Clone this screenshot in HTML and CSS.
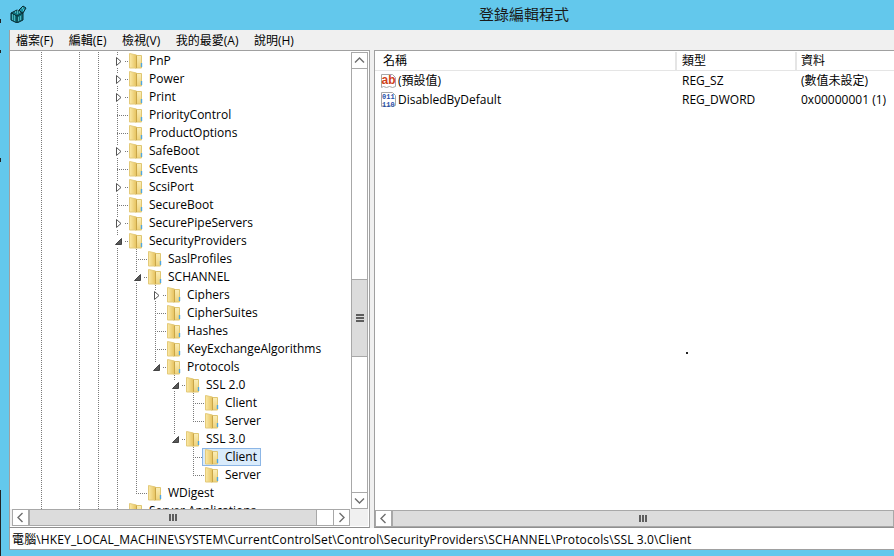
FILE: index.html
```html
<!DOCTYPE html>
<html lang="zh-Hant">
<head>
<meta charset="utf-8">
<title>登錄編輯程式</title>
<link rel="stylesheet" href="styles.css">
</head>
<body>
<svg class="defs" width="0" height="0" aria-hidden="true">
  <defs>
    <linearGradient id="fg" x1="0" y1="0" x2="1" y2="0">
      <stop offset="0" stop-color="#fbeaa8"/>
      <stop offset="1" stop-color="#e6c25e"/>
    </linearGradient>
    <linearGradient id="bg" x1="0" y1="0" x2="0" y2="1">
      <stop offset="0" stop-color="#fbeeb6"/>
      <stop offset="1" stop-color="#efd27a"/>
    </linearGradient>
    <symbol id="folder" viewBox="0 0 14 16">
      <path d="M6 2.500h6.500v12.500H6z" fill="url(#bg)" stroke="#dfc672"/>
      <path d="M.5.500 7.500 2v13H.5z" fill="url(#fg)" stroke="#e4ca7a"/>
      <path d="M7.500 2.500V15" stroke="#c8a548"/>
      <path d="M12.500 10v4" stroke="#4fa6de" stroke-width="1.400"/>
    </symbol>
    <symbol id="closed" viewBox="0 0 9 11">
      <rect width="9" height="11" fill="#fff"/>
      <path d="M2.500 1.500v8l4.500-4z" fill="#fff" stroke="#555"/>
    </symbol>
    <symbol id="open" viewBox="0 0 9 11">
      <rect width="9" height="11" fill="#fff"/>
      <path d="M1.500 8.500h6v-6z" fill="#595959" stroke="#444"/>
    </symbol>
  </defs>
</svg>

<header class="title">
  <svg class="app-icon" width="17" height="18" viewBox="0 0 17 18">
    <path d="M1 8 7 5l6 3v7l-6 3-6-3z" fill="#0f7480" stroke="#0b2a30"/>
    <path d="M7 11v7M1 8l6 3 6-3" stroke="#0b2a30" fill="none"/>
    <path d="M2 10h1M4 11h1M2 12h1M4 13h1M2 14h1M4 15h1M8 13h1M10 12h1M8 15h1M10 14h1M5 7h1M7 8h1M9 7h1M7 6h1" stroke="#8ff3f5"/>
    <path d="M9 5 13 1l3 2-3 5-2-1z" fill="#178c9e" stroke="#0b2a30"/>
    <path d="M12 3h1M13 5h1" stroke="#8ff3f5"/>
  </svg>
  <span class="title-text">登錄編輯程式</span>
</header>

<div class="window">
  <nav class="menu">
    <span>檔案(F)</span><span>編輯(E)</span><span>檢視(V)</span><span>我的最愛(A)</span><span>說明(H)</span>
  </nav>

  <main class="panes">
    <section class="pane tree-pane">
      <div class="tree">
        <svg class="guides" width="341" height="457" viewBox="10 52 341 457">
          <path d="M41.500 52v457M79.500 52v457M98.500 52v457M117.500 52v457
                   M136.500 241v252M155.500 277v90M174.500 367v72M193.500 385v36M193.500 439v36
                   M125 61h4M125 79h4M125 97h4M117 115h12M117 133h12M125 151h4M117 169h12M125 187h4M117 205h12M125 223h4M125 241h4
                   M136 259h12M144 277h4M163 295h4M155 313h12M155 331h12M155 349h12M163 367h4
                   M182 385h4M193 403h12M193 421h12M182 439h4M193 457h9M193 475h12M136 493h12"
                fill="none" stroke="#7a7a7a" stroke-dasharray="1 1" shape-rendering="crispEdges"/>
        </svg>
        <ul class="rows">
          <li class="row l0"><svg class="exp"><use href="#closed"/></svg><span class="node"><svg class="fd"><use href="#folder"/></svg>PnP</span></li>
          <li class="row l0"><svg class="exp"><use href="#closed"/></svg><span class="node"><svg class="fd"><use href="#folder"/></svg>Power</span></li>
          <li class="row l0"><svg class="exp"><use href="#closed"/></svg><span class="node"><svg class="fd"><use href="#folder"/></svg>Print</span></li>
          <li class="row l0"><i class="noexp"></i><span class="node"><svg class="fd"><use href="#folder"/></svg>PriorityControl</span></li>
          <li class="row l0"><i class="noexp"></i><span class="node"><svg class="fd"><use href="#folder"/></svg>ProductOptions</span></li>
          <li class="row l0"><svg class="exp"><use href="#closed"/></svg><span class="node"><svg class="fd"><use href="#folder"/></svg>SafeBoot</span></li>
          <li class="row l0"><i class="noexp"></i><span class="node"><svg class="fd"><use href="#folder"/></svg>ScEvents</span></li>
          <li class="row l0"><svg class="exp"><use href="#closed"/></svg><span class="node"><svg class="fd"><use href="#folder"/></svg>ScsiPort</span></li>
          <li class="row l0"><i class="noexp"></i><span class="node"><svg class="fd"><use href="#folder"/></svg>SecureBoot</span></li>
          <li class="row l0"><svg class="exp"><use href="#closed"/></svg><span class="node"><svg class="fd"><use href="#folder"/></svg>SecurePipeServers</span></li>
          <li class="row l0"><svg class="exp"><use href="#open"/></svg><span class="node"><svg class="fd"><use href="#folder"/></svg>SecurityProviders</span></li>
          <li class="row l1"><i class="noexp"></i><span class="node"><svg class="fd"><use href="#folder"/></svg>SaslProfiles</span></li>
          <li class="row l1"><svg class="exp"><use href="#open"/></svg><span class="node"><svg class="fd"><use href="#folder"/></svg>SCHANNEL</span></li>
          <li class="row l2"><svg class="exp"><use href="#closed"/></svg><span class="node"><svg class="fd"><use href="#folder"/></svg>Ciphers</span></li>
          <li class="row l2"><i class="noexp"></i><span class="node"><svg class="fd"><use href="#folder"/></svg>CipherSuites</span></li>
          <li class="row l2"><i class="noexp"></i><span class="node"><svg class="fd"><use href="#folder"/></svg>Hashes</span></li>
          <li class="row l2"><i class="noexp"></i><span class="node"><svg class="fd"><use href="#folder"/></svg>KeyExchangeAlgorithms</span></li>
          <li class="row l2"><svg class="exp"><use href="#open"/></svg><span class="node"><svg class="fd"><use href="#folder"/></svg>Protocols</span></li>
          <li class="row l3"><svg class="exp"><use href="#open"/></svg><span class="node"><svg class="fd"><use href="#folder"/></svg>SSL 2.0</span></li>
          <li class="row l4"><i class="noexp"></i><span class="node"><svg class="fd"><use href="#folder"/></svg>Client</span></li>
          <li class="row l4"><i class="noexp"></i><span class="node"><svg class="fd"><use href="#folder"/></svg>Server</span></li>
          <li class="row l3"><svg class="exp"><use href="#open"/></svg><span class="node"><svg class="fd"><use href="#folder"/></svg>SSL 3.0</span></li>
          <li class="row l4"><i class="noexp"></i><span class="node sel"><svg class="fd"><use href="#folder"/></svg>Client</span></li>
          <li class="row l4"><i class="noexp"></i><span class="node"><svg class="fd"><use href="#folder"/></svg>Server</span></li>
          <li class="row l1"><i class="noexp"></i><span class="node"><svg class="fd"><use href="#folder"/></svg>WDigest</span></li>
          <li class="row l0"><i class="noexp"></i><span class="node"><svg class="fd"><use href="#folder"/></svg>Server Applications</span></li>
        </ul>
      </div>
      <div class="vbar">
        <span class="btn"><svg width="15" height="15" viewBox="0 0 15 15"><path d="M3 9.500l4.500-4.500 4.500 4.500" class="chev"/></svg></span>
        <span class="track t1"></span>
        <span class="thumb vthumb"><i class="grip-h"></i></span>
        <span class="track"></span>
        <span class="btn"><svg width="15" height="15" viewBox="0 0 15 15"><path d="M3 5.500l4.500 4.500 4.500-4.500" class="chev"/></svg></span>
      </div>
      <div class="hbar">
        <span class="btn"><svg width="15" height="15" viewBox="0 0 15 15"><path d="M9.500 3l-4.500 4.500 4.500 4.500" class="chev"/></svg></span>
        <span class="thumb htree"><i class="grip-v"></i></span>
        <span class="track"></span>
        <span class="btn"><svg width="15" height="15" viewBox="0 0 15 15"><path d="M5.500 3l4.500 4.500-4.500 4.500" class="chev"/></svg></span>
      </div>
      <div class="corner"></div>
    </section>

    <section class="pane list-pane">
      <div class="grid head">
        <span class="c1">名稱</span><span class="c2">類型</span><span class="c3">資料</span>
      </div>
      <div class="grid item">
        <span class="c1 named">
          <svg class="val" width="16" height="16" viewBox="0 0 16 16">
            <path d="M.5 1.500h11l3 3v9l-3 1-3-1-3 1-3-1-2 1z" fill="#fff" stroke="#a8a8a8"/>
            <text x=".5" y="11" class="ab">ab</text>
          </svg>(預設值)
        </span>
        <span class="c2">REG_SZ</span><span class="c3">(數值未設定)</span>
      </div>
      <div class="grid item">
        <span class="c1 named">
          <svg class="val" width="16" height="16" viewBox="0 0 16 16">
            <path d="M.5 .5h11l3 3v10l-3 1-3-1-3 1-3-1-2 1z" fill="#fff" stroke="#a8a8a8"/>
            <text x="1" y="7" class="bits">011</text>
            <text x="1" y="14.500" class="bits">110</text>
          </svg>DisabledByDefault
        </span>
        <span class="c2">REG_DWORD</span><span class="c3">0x00000001 (1)</span>
      </div>
      <div class="list-fill"><i class="speck"></i></div>
      <div class="hbar">
        <span class="btn"><svg width="15" height="15" viewBox="0 0 15 15"><path d="M9.500 3l-4.500 4.500 4.500 4.500" class="chev"/></svg></span>
        <span class="thumb hlist"><i class="grip-v"></i></span>
      </div>
    </section>
  </main>

  <footer class="status">電腦\HKEY_LOCAL_MACHINE\SYSTEM\CurrentControlSet\Control\SecurityProviders\SCHANNEL\Protocols\SSL 3.0\Client</footer>
</div>

<i class="edge e1"></i><i class="edge e2"></i><i class="edge e3"></i><i class="edge e4"></i>
</body>
</html>
```

FILE: styles.css
```css
* { box-sizing: border-box; }
html, body { margin: 0; padding: 0; }
body {
  position: relative;
  width: 894px;
  height: 556px;
  overflow: hidden;
  background: #63c8ec;
  color: #000;
  font: 12px/18px "Open Sans", "Noto Sans CJK TC", sans-serif;
}
.defs { position: absolute; }

.title {
  display: flex;
  align-items: center;
  height: 30px;
  padding-left: 10px;
}
.app-icon { flex: none; margin-bottom: 2px; }
.title-text {
  margin: 0 0 2px 452px;
  font-size: 15px;
  color: #1a1a1a;
}

.window {
  display: flex;
  flex-direction: column;
  margin-left: 9px;
  height: 520px;
  background: #f0f0f0;
}
.menu {
  display: flex;
  gap: 15.500px;
  height: 20px;
  padding: 1px 0 0 6px;
  line-height: 20px;
  border-left: 1px solid #a0a0a0;
}

.panes {
  display: flex;
  gap: 4px;
  height: 478px;
  background: #f0f0f0;
}
.pane {
  background: #fff;
  border-top: 1px solid #a0a0a0;
  border-left: 1px solid #a0a0a0;
  border-bottom: 1px solid #8f8f8f;
  padding-top: 1px;
  height: 478px;
}

.tree-pane {
  display: grid;
  grid-template-columns: 341px 17px 1px;
  grid-template-rows: 457px 17px;
  flex: none;
  width: 361px;
  border-right: 1px solid #a0a0a0;
}
.tree {
  position: relative;
  overflow: hidden;
  height: 457px;
}
.guides { position: absolute; left: 0; top: 0; }
.rows {
  position: relative;
  margin: 0;
  padding: 0;
  list-style: none;
}
.row { display: flex; align-items: center; height: 18px; white-space: nowrap; }
.l0 { padding-left: 97px; }
.l1 { padding-left: 116px; }
.l2 { padding-left: 135px; }
.l3 { padding-left: 154px; }
.l4 { padding-left: 173px; }
.exp { width: 9px; height: 11px; margin: 0 3px 0 7px; flex: none; }
.noexp { width: 19px; flex: none; }
.node {
  display: inline-flex;
  align-items: center;
  height: 18px;
  padding: 0 3px 0 2px;
  border: 1px solid transparent;
}
.sel { background: #d9ebfb; border-color: #8cb6e6; }
.fd { width: 14px; height: 16px; margin-right: 6px; flex: none; }

.vbar {
  display: flex;
  flex-direction: column;
  width: 17px;
  height: 457px;
  background: #fff;
}
.btn {
  display: block;
  flex: none;
  width: 17px;
  height: 17px;
  background: #fff;
  border: 1px solid #a8a8a8;
}
.btn svg { display: block; }
.chev { fill: none; stroke: #6e6e6e; stroke-width: 1.400; }
.track {
  flex: 1;
  background: #fff;
  border-left: 1px solid #a8a8a8;
  border-right: 1px solid #a8a8a8;
}
.track.t1 { flex: none; height: 210px; }
.thumb {
  display: flex;
  align-items: center;
  justify-content: center;
  flex: none;
  background: #dcdcdc;
  border: 1px solid #a8a8a8;
}
.vthumb { height: 78px; }
.grip-h {
  width: 8px;
  height: 8px;
  background: repeating-linear-gradient(#5e5e5e 0 2px, #dcdcdc 2px 3px);
}
.grip-v {
  width: 8px;
  height: 7px;
  background: repeating-linear-gradient(90deg, #5e5e5e 0 2px, #dcdcdc 2px 3px);
}

.tree-pane > .hbar { grid-column: 1; grid-row: 2; padding-left: 2px; padding-right: 1px; }
.hbar {
  display: flex;
  height: 17px;
  background: #f0f0f0;
}
.hbar .track {
  border: 0;
  border-top: 1px solid #a8a8a8;
  border-bottom: 1px solid #a8a8a8;
}
.htree { width: 288px; }
.hlist { flex: 1; }
.corner { grid-column: 2; grid-row: 2; background: #f0f0f0; }

.list-pane {
  display: flex;
  flex-direction: column;
  width: 520px;
  flex: none;
}
.grid {
  display: grid;
  grid-template-columns: 300px 120px 1fr;
  flex: none;
}
.head {
  height: 19px;
  line-height: 18px;
  border-bottom: 1px solid #e5e5e5;
}
.head .c1 { padding-left: 8px; }
.head .c2, .head .c3 { border-left: 2px solid #e5e5e5; }
.c2 { padding-left: 7px; }
.c3 { padding-left: 6px; }
.head .c2 { padding-left: 5px; }
.head .c3 { padding-left: 4px; }
.item { height: 19px; line-height: 19px; }
.named { display: flex; align-items: center; padding-left: 6px; }
.val { flex: none; margin-right: 1px; }
.ab { font: 700 12px "Liberation Sans", sans-serif; fill: #d0421b; }
.bits { font: 700 7px "Liberation Mono", monospace; fill: #1f4fa8; }
.list-fill { flex: 1; position: relative; }
.speck {
  position: absolute;
  left: 311px;
  top: 243px;
  width: 2px;
  height: 2px;
  background: #222;
}

.status {
  flex: none;
  height: 22px;
  padding: 2px 0 0 2px;
  background: #fff;
  border-left: 1px solid #a0a0a0;
  border-bottom: 1px solid #a0a0a0;
  line-height: 19px;
  letter-spacing: .13px;
  white-space: nowrap;
}

.edge { position: absolute; left: 0; width: 1px; background: #222; }
.e1 { top: 19px; height: 4px; }
.e2 { top: 50px; height: 3px; }
.e3 { top: 158px; height: 4px; }
.e4 { top: 490px; height: 66px; }
```
